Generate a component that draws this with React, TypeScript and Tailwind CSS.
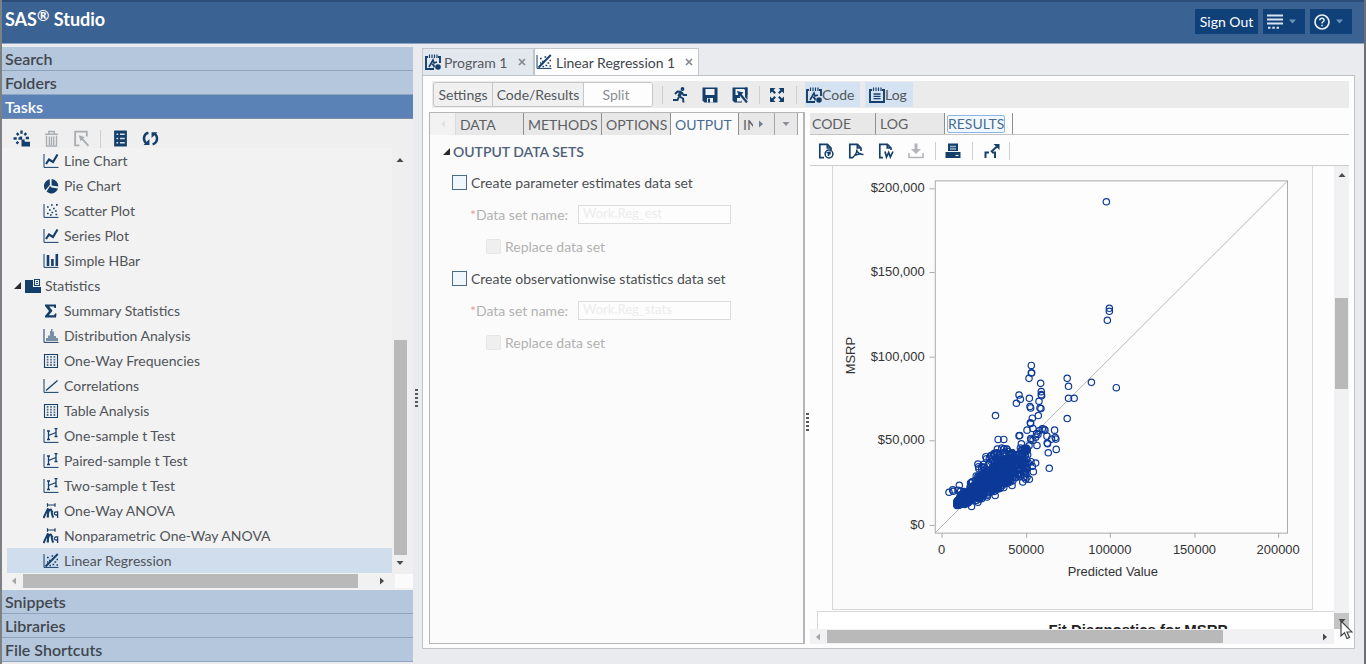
import { useState, type ReactNode } from "react";

const NAVY = "#153f6b";

function Icon({ children, size = 16, color = NAVY }: { children: ReactNode; size?: number; color?: string }) {
  return (
    <svg width={size} height={size} viewBox="0 0 16 16" fill="none" stroke={color} strokeWidth="1.4" aria-hidden="true" className="shrink-0">
      {children}
    </svg>
  );
}

const Axes = () => <path d="M1 1V14.4H15.5" strokeWidth="1" />;

const icons = {
  line: (
    <Icon>
      <Axes />
      <path d="M3 11L6 6.5L10 9L14.5 1.5" strokeWidth="2.2" />
    </Icon>
  ),
  pie: (
    <Icon>
      <path d="M7 8L3.6 13.6A7 7 0 0 0 15 10.5L8.6 9.4ZM8.6 1A7 7 0 0 1 15.2 8.6L8.6 7.4ZM6.8 1.2V7L2.3 12.2A7 7 0 0 1 6.8 1.2Z" fill={NAVY} stroke="none" />
    </Icon>
  ),
  scatter: (
    <Icon>
      <Axes />
      <path d="M4 4h1.7M8 2h1.7M13 1.8h1.7M6 7h1.7M10 5.5h1.7M4 10.5h1.7M8.5 9.5h1.7M12 8h1.7M7 12h1.7M12.5 11.5h1.7" strokeWidth="1.7" />
    </Icon>
  ),
  bars: (
    <Icon>
      <Axes />
      <path d="M5 2V13M9.4 6V13M13.8 1V13" strokeWidth="2.6" />
    </Icon>
  ),
  folder: (
    <Icon>
      <path d="M0 2H8V9H16V15H0Z" fill={NAVY} stroke="none" />
      <path d="M9.5 1.5H14.5V7.5H9.5ZM11 3.5h2M11 5.5h2" strokeWidth="1.1" />
    </Icon>
  ),
  sigma: (
    <Icon>
      <path d="M2 1.5H13V5H11.5L10.8 3.5H6.2L9.5 7.8L5.8 12.3H11L12 10.5H13.5L13 14.5H2V13L6 8L2 3Z" fill={NAVY} stroke="none" />
    </Icon>
  ),
  dist: (
    <Icon>
      <Axes />
      <path d="M3 13V10H5V7.5H7V3H8V1H9.5V3.5H11V8H13V10H15V13Z" fill="#7890a6" stroke="none" />
    </Icon>
  ),
  table: (
    <Icon>
      <path d="M1.5 1.5H14.5V14.5H1.5Z" strokeWidth="1.1" />
      <path d="M4.6 3V13.500M8 3V13.500M11.4 3V13.500" strokeWidth="1.7" strokeDasharray="1.800 0.900" stroke="#4d6b89" />
    </Icon>
  ),
  corr: (
    <Icon>
      <Axes />
      <path d="M3 12.5L14.5 2.5" strokeWidth="1.3" />
    </Icon>
  ),
  ttest: (
    <Icon>
      <Axes />
      <path d="M5.5 3V11.500M4 3h3M4 11.500h3M13 0.500V8.500M11.500 0.500h3M11.500 8.500h3M5.5 7.500L13 4.500" strokeWidth="1.3" />
    </Icon>
  ),
  anova: (
    <Icon>
      <path d="M4 2H12.5M4.5 0.3V3.7M12 0.3V3.7" strokeWidth="1.2" />
      <path d="M0.5 15L5 5.5V14.5M4.5 14.5C5 8 6.5 6 8 6.5C9 7 8.5 13 10.5 14.5" strokeWidth="1.9" />
      <path d="M14.6 8.2V15M14.5 9.2C10.5 7.8 10.2 13 14.3 11.8M8.2 9.5L10 8" strokeWidth="1.3" />
    </Icon>
  ),
  regress: (
    <Icon>
      <Axes />
      <path d="M2.5 13.5L14.8 1" strokeWidth="1.9" />
      <path d="M4 4.5h1.7M6 7.5h1.7M8.5 3h1.7M4 9h1.2M9.5 11.5h1.7M11.5 9h1.7M13.5 12h1.5M13.5 6.5h1.5M6.5 12.5h1.5" strokeWidth="1.7" />
    </Icon>
  ),
  addTask: (
    <Icon size={17}>
      <path d="M8 9H11V11H16V15.500H8Z" fill={NAVY} stroke="none" />
      <path d="M8 0.500V3.500M3.500 3L5.3 4.8M0.500 8H3.500M3.3 12.8L5 11M12.500 3L10.7 4.8M5.200 8H8.500M7.500 6V9M12 7.500H15" strokeWidth="2.200" />
    </Icon>
  ),
  trash: (
    <Icon color="#a9adb2" size={17}>
      <path d="M2 4H14M5.5 3.5V1.5H10.5V3.5" />
      <path d="M3.3 5.5V15H12.7V5.5M6 6V14M8 6V14M10.1 6V14" strokeWidth="1.3" />
    </Icon>
  ),
  editTask: (
    <Icon color="#a9adb2" size={17}>
      <path d="M6 14.5H2V1.5H13V6M7.5 7L14.5 15" strokeWidth="1.7" />
      <path d="M5.5 5L11 6.5L7 10.5Z" fill="#a9adb2" stroke="none" />
    </Icon>
  ),
  list: (
    <Icon size={17}>
      <path d="M2 0.5H14V15.5H2Z" fill={NAVY} stroke="none" />
      <path d="M4.2 4h1.6M4.2 8h1.6M4.2 12h1.6M7.5 4H12M7.5 8H12M7.5 12H12" stroke="#d7e0e9" strokeWidth="1.2" />
    </Icon>
  ),
  refresh: (
    <Icon size={17}>
      <path d="M6 2.500C1 4 0.800 9.500 4 12.500M10 13.500C15 12 15.200 6.500 12 3.500" strokeWidth="2.300" />
      <path d="M1.500 14H7V8.500ZM14.500 2H9V7.500Z" fill={NAVY} stroke="none" />
    </Icon>
  ),
  program: (
    <Icon>
      <path d="M3 3H1V15H9M13 3H15V9" strokeWidth="1.9" />
      <path d="M4.500 0.500V4M7 0.500V4M9.500 0.500V4M12 0.500V4" strokeWidth="1.200" />
      <path d="M4 13L8 6L9 9L12 8M7 10L9 11.500V13.500" strokeWidth="1.600" />
      <circle cx="13" cy="13" r="2.800" fill={NAVY} stroke="none" />
    </Icon>
  ),
  log: (
    <Icon>
      <path d="M3 3H1V15H15V3H13" strokeWidth="1.900" />
      <path d="M4.500 0.500V4M7 0.500V4M9.500 0.500V4M12 0.500V4" strokeWidth="1.200" />
      <path d="M4.500 7H11.500M4.500 9.300H11.500M4.500 11.600H11.500" strokeWidth="1.300" />
    </Icon>
  ),
  run: (
    <Icon>
      <circle cx="10.500" cy="2" r="1.900" fill={NAVY} stroke="none" />
      <path d="M9.500 4.500L6.800 9.500" strokeWidth="3.200" />
      <path d="M3 7L5.500 4.500L9.500 4.700M7.500 9.500L11 11.500L11.500 15.500" strokeWidth="2" />
      <path d="M7 9.500L5.500 13H1M9.800 5.500L11.500 8H15" strokeWidth="1.900" />
    </Icon>
  ),
  save: (
    <Icon>
      <path d="M0.500 0.500H15.500V15.500H2.500L0.500 13.500Z" fill={NAVY} stroke="none" />
      <path d="M3.500 2H12.500V8H3.500ZM5 11H11V15.500H5Z" fill="#eef1f4" stroke="none" />
      <path d="M6 11.500H8V15.500H6Z" fill={NAVY} stroke="none" />
    </Icon>
  ),
  saveAs: (
    <Icon>
      <path d="M15.500 8V0.500H0.500V13.500L2.500 15.500H10L7 8V3H13V8Z" fill={NAVY} stroke="none" />
      <path d="M3.500 2H12.500V8H3.500ZM5 11H9V14.500H5Z" fill="#eef1f4" stroke="none" />
      <path d="M5 4L11.500 5.500L7 10Z" fill={NAVY} stroke="none" />
      <path d="M8 7L15 15.500" strokeWidth="2.200" />
      <path d="M13 0.500H15.500V13L13 10Z" fill={NAVY} stroke="none" />
    </Icon>
  ),
  expand: (
    <Icon>
      <path d="M1 1H6.500L1 6.500ZM15 1H9.500L15 6.500ZM1 15H6.500L1 9.500ZM15 15H9.500L15 9.500Z" fill={NAVY} stroke="none" />
      <path d="M2 2L6.200 6.200M14 2L9.800 6.200M2 14L6.200 9.800M14 14L9.800 9.800" strokeWidth="2.200" />
    </Icon>
  ),
  html: (
    <Icon>
      <path d="M6 14.600H1.800V1.300H9.500L13 5V7M9.300 1.500V5H13" strokeWidth="1.700" />
      <circle cx="11" cy="11" r="3.900" strokeWidth="1.500" />
      <path d="M8.500 9.500H10.500V13M12 8.500V11.500" strokeWidth="1.600" />
    </Icon>
  ),
  pdf: (
    <Icon>
      <path d="M5 14.600H1.800V1.300H9.500L13 5V8M9.300 1.500V5H12" strokeWidth="1.700" />
      <path d="M5 14.500C8 11 9.500 8 8.500 6.500M8.500 7C9.500 10 12 11.500 15.500 11.500M6 12.500L13 10.500" strokeWidth="1.500" />
    </Icon>
  ),
  word: (
    <Icon>
      <path d="M5 14.600H1.800V1.300H9.500L13 5V7M9.300 1.500V5H12" strokeWidth="1.700" />
      <path d="M7 8.500L8.500 14L10.700 9.500L12.300 14L15 8.500" strokeWidth="1.700" />
    </Icon>
  ),
  download: (
    <Icon color="#b3b5b8">
      <path d="M6.500 0.500H9.500V6H13L8 11L3 6H6.500Z" fill="#b3b5b8" stroke="none" />
      <path d="M1 10V14.500H15V10" strokeWidth="1.600" />
    </Icon>
  ),
  print: (
    <Icon>
      <path d="M3 0.500H13V8H3ZM0.500 9H15.500V15H0.500Z" fill={NAVY} stroke="none" />
      <path d="M5 3.500H11M5 6H11" stroke="#9cb3c8" strokeWidth="1.300" />
      <path d="M10.500 12.500H13.500" stroke="#dfe7ee" strokeWidth="1.200" />
    </Icon>
  ),
  popout: (
    <Icon>
      <path d="M9.500 1H15.500V7Z" fill={NAVY} stroke="none" />
      <path d="M7 9L13.500 3" strokeWidth="1.900" />
      <path d="M1.500 15V9.500H5M8 9.500H11V15" strokeWidth="2" />
    </Icon>
  ),
};

type IconName = keyof typeof icons;

const tree: { label: string; icon: IconName; group?: boolean }[] = [
  { label: "Line Chart", icon: "line" },
  { label: "Pie Chart", icon: "pie" },
  { label: "Scatter Plot", icon: "scatter" },
  { label: "Series Plot", icon: "line" },
  { label: "Simple HBar", icon: "bars" },
  { label: "Statistics", icon: "folder", group: true },
  { label: "Summary Statistics", icon: "sigma" },
  { label: "Distribution Analysis", icon: "dist" },
  { label: "One-Way Frequencies", icon: "table" },
  { label: "Correlations", icon: "corr" },
  { label: "Table Analysis", icon: "table" },
  { label: "One-sample t Test", icon: "ttest" },
  { label: "Paired-sample t Test", icon: "ttest" },
  { label: "Two-sample t Test", icon: "ttest" },
  { label: "One-Way ANOVA", icon: "anova" },
  { label: "Nonparametric One-Way ANOVA", icon: "anova" },
  { label: "Linear Regression", icon: "regress" },
];

function Arrow({ dir, color = "#4a4a4a" }: { dir: "up" | "down" | "left" | "right"; color?: string }) {
  const d = { up: "M0.500 6L4 2L7.500 6Z", down: "M0.500 2L4 6L7.500 2Z", left: "M6 0.500L2 4L6 7.500Z", right: "M2 0.500L6 4L2 7.500Z" }[dir];
  return (
    <svg width="8" height="8" viewBox="0 0 8 8" aria-hidden="true" className="shrink-0">
      <path d={d} fill={color} />
    </svg>
  );
}

function OpenMarker() {
  return (
    <svg width="7" height="7" viewBox="0 0 7 7" aria-hidden="true" className="shrink-0">
      <path d="M7 0V7H0Z" fill="#2b2b2b" />
    </svg>
  );
}

function Section({ label }: { label: string }) {
  return (
    <button className="flex h-6 w-full shrink-0 items-center border-b border-[#8fa3bb] bg-[#b4c7dd] pl-[3px] text-left text-[16px] font-semibold text-[#42474f]">
      {label}
    </button>
  );
}

function ToolButton({ icon, label }: { icon: IconName; label: string }) {
  return (
    <button aria-label={label} className="flex w-[30px] items-center justify-center">
      {icons[icon]}
    </button>
  );
}

const Separator = () => <span className="h-[18px] w-px shrink-0 bg-[#cfcfcf]" />;

function Splitter({ className }: { className: string }) {
  return (
    <div className={`flex shrink-0 justify-center ${className}`}>
      <svg width="3" height="20" aria-hidden="true">
        <path d="M1.500 0V20" stroke="#55585c" strokeWidth="3" strokeDasharray="2 2" />
      </svg>
    </div>
  );
}

function Sidebar() {
  return (
    <aside className="flex w-[411px] shrink-0 flex-col pt-[3px] pb-[2px]">
      <Section label="Search" />
      <Section label="Folders" />
      <button className="flex h-6 w-full shrink-0 items-center border-b border-[#7d8fa6] bg-[#5a82b7] pl-[3px] text-left text-[16px] font-semibold text-white">
        Tasks
      </button>
      <div className="flex min-h-0 flex-1 flex-col bg-[#f2f2f2]">
        <div className="flex h-[29px] shrink-0 items-center bg-[#efefef] pt-[10px] pl-1">
          <ToolButton icon="addTask" label="New task" />
          <ToolButton icon="trash" label="Delete" />
          <ToolButton icon="editTask" label="Edit task" />
          <span className="w-1" />
          <Separator />
          <span className="w-1" />
          <ToolButton icon="list" label="Properties" />
          <ToolButton icon="refresh" label="Refresh" />
        </div>
        <div className="flex min-h-0 flex-1">
          <ul className="min-w-0 flex-1 overflow-hidden pl-[5px]">
            {tree.map((t) => (
              <li key={t.label}>
                <button
                  className={`flex h-[25px] w-full items-center text-[14px] text-[#505459] ${t.group ? "pl-[7px]" : "pl-9"} ${
                    t.label === "Linear Regression" ? "bg-[#cfdded]" : ""
                  }`}
                >
                  {t.group && <OpenMarker />}
                  <span className={t.group ? "mr-1 ml-1" : "mr-[5px]"}>{icons[t.icon]}</span>
                  {t.label}
                </button>
              </li>
            ))}
          </ul>
          <div className="flex w-[21px] flex-col items-center bg-[#efeff0] pt-2 pr-[5px] pb-[7px]" aria-hidden="true">
            <Arrow dir="up" />
            <span className="flex-1" />
            <span className="h-[215px] w-[13px] bg-[#b9b9b9]" />
            <span className="h-1" />
            <Arrow dir="down" />
          </div>
        </div>
        <div className="mb-[2px] flex h-[14px] shrink-0 items-center bg-[#f1f1f2] pl-2" aria-hidden="true">
          <Arrow dir="left" color="#a5a5a5" />
          <span className="ml-[5px] h-[14px] w-[335px] bg-[#b9b9b9]" />
          <span className="ml-5 flex-1">
            <Arrow dir="right" />
          </span>
          <span className="h-full w-[18px] bg-[#fbfbfb]" />
        </div>
      </div>
      <Section label="Snippets" />
      <Section label="Libraries" />
      <Section label="File Shortcuts" />
    </aside>
  );
}

function DataSetFields({ id, label, value }: { id: string; label: string; value: string }) {
  const [on, setOn] = useState(false);
  return (
    <div>
      <div className="flex h-8 items-center gap-1">
        <input
          id={id}
          type="checkbox"
          checked={on}
          onChange={(e) => setOn(e.target.checked)}
          className="size-[15px] appearance-none border border-[#4d6b83] bg-[#eff6fc] checked:bg-[#5a82b7]"
        />
        <label htmlFor={id} className="text-[14px] text-[#4b4f54]">{label}</label>
      </div>
      <div className="flex h-8 items-center pl-[18px]">
        <label htmlFor={`${id}-name`} className="w-[108px] text-[14px] text-[#b2b2b2]">
          <span className="text-[#e8a0a0]">*</span>Data set name:
        </label>
        <input id={`${id}-name`} disabled defaultValue={value} className="h-[19px] w-[153px] border border-[#dcdcdc] bg-[#fdfdfd] px-1 text-[13px] text-[#ececec]" />
      </div>
      <div className="flex h-8 items-center gap-1 pl-[34px]">
        <input id={`${id}-replace`} type="checkbox" disabled className="size-[15px] appearance-none rounded-[2px] border border-[#e6e6e6] bg-[#efefef]" />
        <label htmlFor={`${id}-replace`} className="text-[14px] text-[#b2b2b2]">Replace data set</label>
      </div>
    </div>
  );
}

const tabStyle = "flex shrink-0 items-center border-r border-[#8f8f8f] bg-[#e8e8e8] text-[14px] text-[#5c6064]";

function SettingsPane() {
  return (
    <section className="flex w-[376px] shrink-0 flex-col border border-r-2 border-[#b5b5b5] bg-[#fbfbfb]">
      <div className="flex h-[22px] shrink-0 pr-[5px]">
        <button aria-label="Previous tab" className="flex w-[26px] items-center justify-center border-r border-[#dcdcdc] bg-[#f2f2f2]">
          <Arrow dir="left" color="#e2e2e2" />
        </button>
        <button className={`${tabStyle} w-[68px] pl-1`}>DATA</button>
        <button className={`${tabStyle} w-[78px] pl-1`}>METHODS</button>
        <button className={`${tabStyle} w-[69px] pl-1`}>OPTIONS</button>
        <button className="flex w-[68px] items-center border-r border-[#8f8f8f] px-1 text-[14px] text-[#4a6b91]">OUTPUT</button>
        <button className="flex w-[14px] items-center overflow-hidden bg-[#e8e8e8] pl-1 text-[14px] text-[#5c6064]">INFO</button>
        <button aria-label="Next tab" className="flex flex-1 items-center border-r border-[#a5a5a5] bg-[#e8e8e8] pl-1">
          <Arrow dir="right" color="#6a7f98" />
        </button>
        <button aria-label="All tabs" className="flex w-[23px] items-center justify-center border-r border-[#a5a5a5] bg-[#e8e8e8]">
          <Arrow dir="down" color="#8a8f96" />
        </button>
      </div>
      <div className="pt-[2px] pl-[13px]">
        <h2 className="mb-px flex h-7 items-center gap-[3px] text-[14px] font-semibold text-[#4e6079]">
          <OpenMarker />
          OUTPUT DATA SETS
        </h2>
        <div className="pl-[9px]">
          <DataSetFields id="estimates" label="Create parameter estimates data set" value="Work.Reg_est" />
          <DataSetFields id="observations" label="Create observationwise statistics data set" value="Work.Reg_stats" />
        </div>
      </div>
    </section>
  );
}

/* Points are kept on a grid three times finer than the drawing. */
const points: [number, number][] = [
  [531, -417], [540, -96], [540, -87], [534, -60],
  [305, 76], [305, 99], [306, 98], [298, 115], [333, 130], [335, 155], [335, 164], [336, 167], [328, 184],
  [268, 165], [272, 178], [260, 190], [299, 175], [301, 200], [303, 204], [331, 204], [334, 206], [326, 227],
  [308, 235], [302, 249], [303, 251], [413, 115], [417, 139], [486, 127], [561, 143], [417, 175], [434, 175],
  [413, 236], [197, 227], [205, 299], [222, 299], [375, 271], [343, 268], [346, 271], [292, 271], [310, 266],
  [338, 267], [330, 272], [325, 284], [321, 281], [352, 289], [377, 293], [379, 298], [366, 298], [353, 310],
  [354, 312], [380, 329], [356, 339], [359, 386], [322, 317], [304, 300], [303, 296], [270, 287], [268, 288],
  [310, 302], [298, 318], [318, 292], [275, 312], [272, 325], [290, 325], [318, 370], [304, 366], [308, 380],
  [311, 396], [299, 419], [279, 427], [292, 412], [288, 419], [247, 438], [222, 444], [196, 468], [172, 472],
  [144, 488], [125, 501], [88, 437], [57, 458], [68, 451], [70, 455], [84, 452], [92, 455], [144, 373],
  [146, 381], [147, 387], [168, 351], [170, 357], [122, 430], [128, 426], [296, 370], [284, 380], [270, 390],
];

function cloud(): [number, number][] {
  let s = 7;
  const rnd = () => {
    s = (s * 16807) % 2147483647;
    return s / 2147483647;
  };
  const edge = [
    [80, 484, 500], [100, 455, 498], [120, 434, 490], [150, 384, 482], [180, 350, 466],
    [205, 322, 454], [225, 322, 440], [245, 336, 430], [265, 340, 416], [280, 312, 416], [297, 332, 408],
  ];
  const at = (x: number) => {
    const i = Math.max(1, edge.findIndex((e) => e[0] >= x));
    const a = edge[i - 1];
    const b = edge[i];
    const f = (x - a[0]) / (b[0] - a[0]);
    return [a[1] + (b[1] - a[1]) * f, a[2] + (b[2] - a[2]) * f];
  };
  const out: [number, number][] = [];
  for (let i = 0; i < 640; i++) {
    const x = i % 6 === 0 ? 235 + rnd() * 60 : 81 + rnd() * 162;
    const [top, bottom] = at(x);
    const f = i % 2 === 0 ? rnd() : 0.3 + rnd() * 0.65;
    out.push([x, top + (bottom - top) * f]);
  }
  return out;
}

const allPoints = [...cloud(), ...points];

function ScatterChart() {
  const yTicks = ["$200,000", "$150,000", "$100,000", "$50,000", "$0"];
  const xTicks = ["0", "50000", "100000", "150000", "200000"];
  return (
    <svg width="481" height="444" viewBox="0 0 481 444" role="img" aria-label="MSRP by predicted value" className="block border border-t-0 border-[#d8d8d8] bg-[#fbfbfc] font-['Liberation_Sans',sans-serif]">
      <rect x="102.500" y="14.500" width="353" height="353" transform="scale(1.002)" fill="#fdfdfe" stroke="#a9a9a9" />
      <path d="M103 367.500L456 15" stroke="#b4b4b4" />
      {yTicks.map((t, i) => {
        const y = Math.round(22 + i * 84.4);
        return (
          <g key={t}>
            <path d={`M97 ${y + 0.5}H102`} stroke="#a9a9a9" />
            <text x="92" y={y + 4} textAnchor="end" fontSize="13" fill="#333">{t}</text>
          </g>
        );
      })}
      {xTicks.map((t, i) => {
        const x = Math.round(109 + i * 84.5);
        return (
          <g key={t}>
            <path d={`M${x + 0.5} 368V373`} stroke="#a9a9a9" />
            <text x={x} y="389" textAnchor="middle" fontSize="13" fill="#333">{t}</text>
          </g>
        );
      })}
      <text x="281" y="411" textAnchor="middle" fontSize="13" fill="#333">Predicted Value</text>
      <text transform="translate(22 190) rotate(-90)" textAnchor="middle" fontSize="13" fill="#333">MSRP</text>
      <g fill="none" stroke="#0d3a98" strokeWidth="1.200">
        {allPoints.map(([x, y], i) => (
          <circle key={i} cx={x / 3 + 97.5} cy={y / 3 + 174.500} r="3.200" />
        ))}
      </g>
    </svg>
  );
}

function ResultsPane() {
  return (
    <section className="flex min-w-0 flex-1 flex-col">
      <div className="flex h-[23px] shrink-0 border-b border-[#c4c4c4] pt-px">
        <button className={`${tabStyle} w-[66px] pl-[2px]`}>CODE</button>
        <button className={`${tabStyle} w-[69px] pl-1`}>LOG</button>
        <button className="flex w-[68px] items-center border-r border-[#8f8f8f] px-[2px] text-[14px] text-[#4a6b91]">
          <span className="rounded-[2px] border border-[#8db4e2] bg-[#f2f8ff] leading-4">RESULTS</span>
        </button>
      </div>
      <div className="flex h-[31px] shrink-0 items-center border-b border-[#cdcdcd] pt-[2px] pl-px">
        <ToolButton icon="html" label="HTML" />
        <ToolButton icon="pdf" label="PDF" />
        <ToolButton icon="word" label="Word" />
        <ToolButton icon="download" label="Download" />
        <span className="w-1" />
        <Separator />
        <span className="w-[2px]" />
        <ToolButton icon="print" label="Print" />
        <span className="w-1" />
        <Separator />
        <span className="w-1" />
        <ToolButton icon="popout" label="Open in new tab" />
        <span className="w-[2px]" />
        <Separator />
      </div>
      <div className="flex min-h-0 flex-1">
        <div className="min-w-0 flex-1 overflow-hidden pl-[7px]">
          <div className="ml-[15px]">
            <ScatterChart />
          </div>
          <div className="mt-px border-t border-l border-[#d8d8d8] bg-white pt-2 pl-[124px] text-center font-['Liberation_Sans',sans-serif] text-[15px] leading-5 font-bold whitespace-nowrap text-[#222]">
            Fit Diagnostics for MSRP
          </div>
        </div>
        <div className="relative flex w-[15px] flex-col items-center bg-[#f1f1f3] pt-[5px]" aria-hidden="true">
          <Arrow dir="up" />
          <span className="mt-[119px] h-[91px] w-[13px] bg-[#b9b9b9]" />
          <span className="flex-1" />
          <span className="flex h-4 w-full items-center justify-center bg-[#c4c4c4]">
            <Arrow dir="down" />
          </span>
          <svg width="13" height="20" viewBox="0 0 13 20" className="absolute top-[454px] left-[6px]">
            <path d="M1 1V16L4.500 12.800L7 18.500L9.500 17.400L7 12H12Z" fill="#fff" stroke="#444" strokeWidth="1.200" />
          </svg>
        </div>
      </div>
      <div className="flex h-[15px] shrink-0 items-center bg-[#f1f1f3] pl-1" aria-hidden="true">
        <Arrow dir="left" color="#a5a5a5" />
        <span className="ml-[5px] h-[13px] w-[396px] bg-[#b9b9b9]" />
        <span className="flex-1" />
        <Arrow dir="right" />
        <span className="ml-[5px] h-full w-[15px] bg-[#fdfdfd]" />
      </div>
    </section>
  );
}

function CloseMark() {
  return (
    <svg width="8" height="8" viewBox="0 0 8 8" aria-hidden="true">
      <path d="M1 1L7 7M7 1L1 7" stroke="#85898e" strokeWidth="1.700" />
    </svg>
  );
}

function Workspace() {
  return (
    <main className="flex min-w-0 flex-1 flex-col pt-1 pr-[9px] pb-[15px]">
      <div className="flex h-[27px] shrink-0 items-stretch" role="tablist">
        <div className="flex w-[112px] items-center border border-b-0 border-[#c2c6cb] bg-[#e3e8ee] pl-[2px]">
          <button role="tab" className="flex items-center gap-[3px] text-[14px] text-[#54585d]">
            {icons.program}
            Program 1
          </button>
          <button aria-label="Close Program 1" className="ml-auto pr-[7px]">
            <CloseMark />
          </button>
        </div>
        <div className="flex w-[165px] items-center border border-b-0 border-[#c2c6cb] bg-[#fdfdfd] pl-px">
          <button role="tab" aria-selected="true" className="flex items-center gap-1 text-[14px] text-[#3f464e]">
            {icons.regress}
            Linear Regression 1
          </button>
          <button aria-label="Close Linear Regression 1" className="ml-auto pr-[5px]">
            <CloseMark />
          </button>
        </div>
      </div>
      <div className="flex min-h-0 flex-1 flex-col border border-[#bfc2c6] bg-[#fdfdfd] pt-[5px] pr-[5px] pb-1 pl-[6px]">
        <div className="ml-[3px] flex h-[27px] shrink-0 items-center bg-[#ebebeb] pl-px text-[14px] text-[#54585d]">
          <div className="flex h-[25px] overflow-hidden rounded-[3px] border border-[#c6c6c6] bg-[#f0f0f0]">
            <button className="w-[58px]">Settings</button>
            <button className="w-[92px] border-x border-[#c6c6c6]">Code/Results</button>
            <button className="w-[68px] bg-[#fdfdfd] pr-1 text-[#8a8d91]">Split</button>
          </div>
          <span className="w-[9px]" />
          <Separator />
          <span className="w-[2px]" />
          <ToolButton icon="run" label="Run" />
          <ToolButton icon="save" label="Save" />
          <ToolButton icon="saveAs" label="Save as" />
          <span className="w-1" />
          <Separator />
          <span className="w-[2px]" />
          <ToolButton icon="expand" label="Maximize" />
          <span className="w-1" />
          <Separator />
          <button className="ml-2 flex h-[25px] w-[55px] items-center bg-[#d5e2f2] pl-px">
            {icons.program}
            Code
          </button>
          <button className="ml-[5px] flex h-[25px] w-12 items-center bg-[#d5e2f2] pl-1">
            {icons.log}
            Log
          </button>
        </div>
        <div className="mt-1 flex min-h-0 flex-1">
          <SettingsPane />
          <Splitter className="w-[5px] items-center pt-[90px]" />
          <ResultsPane />
        </div>
      </div>
    </main>
  );
}

export default function App() {
  return (
    <div className="flex h-screen flex-col overflow-hidden border-x-2 border-l-[#7d8186] border-r-[#6b6f74] bg-[#e9ebee] font-['Lato','Liberation_Sans',sans-serif]">
      <header className="flex h-[44px] shrink-0 items-start justify-between border-t-2 border-b border-t-[#2b4d78] border-b-[#8da3be] bg-[#3a6292] pr-3 pl-[3px]">
        <h1 className="pt-[5px] text-[18px] leading-6 font-bold text-white">
          SAS<span className="relative -top-[5px] text-[15px]">®</span> Studio
        </h1>
        <div className="flex gap-[5px] pt-[7px] text-[14px] text-white">
          <button className="h-[25px] w-[63px] bg-[#0f4078]">Sign Out</button>
          <button aria-label="More options" className="flex h-[25px] w-[42px] items-center gap-[6px] bg-[#0f4078] pl-1">
            <svg width="16" height="16" viewBox="0 0 16 16" aria-hidden="true">
              <path d="M0 1.500H16M0 5.500H16M0 9.500H16" stroke="#d9e4f0" strokeWidth="2.200" />
              <path d="M1 13.700H12" stroke="#d9e4f0" strokeWidth="2" strokeDasharray="2.500 1.800" />
            </svg>
            <svg width="7" height="5" viewBox="0 0 7 5" aria-hidden="true"><path d="M0 0.500H7L3.500 4.500Z" fill="#6d94bf" /></svg>
          </button>
          <button aria-label="Help" className="flex h-[25px] w-[42px] items-center gap-[6px] bg-[#0f4078] pl-1">
            <svg width="16" height="16" viewBox="0 0 16 16" fill="none" stroke="#e6eef6" aria-hidden="true">
              <circle cx="8" cy="8" r="7" strokeWidth="1.700" />
              <path d="M5.800 6.200C6 3.600 10.200 3.800 10.100 6.300C10 7.800 8 7.800 8 9.500M8 10.800V12.300" strokeWidth="1.500" />
            </svg>
            <svg width="7" height="5" viewBox="0 0 7 5" aria-hidden="true"><path d="M0 0.500H7L3.500 4.500Z" fill="#6d94bf" /></svg>
          </button>
        </div>
      </header>
      <div className="flex min-h-0 flex-1">
        <Sidebar />
        <Splitter className="w-[9px] items-center pr-[2px] pt-[90px]" />
        <Workspace />
      </div>
    </div>
  );
}
